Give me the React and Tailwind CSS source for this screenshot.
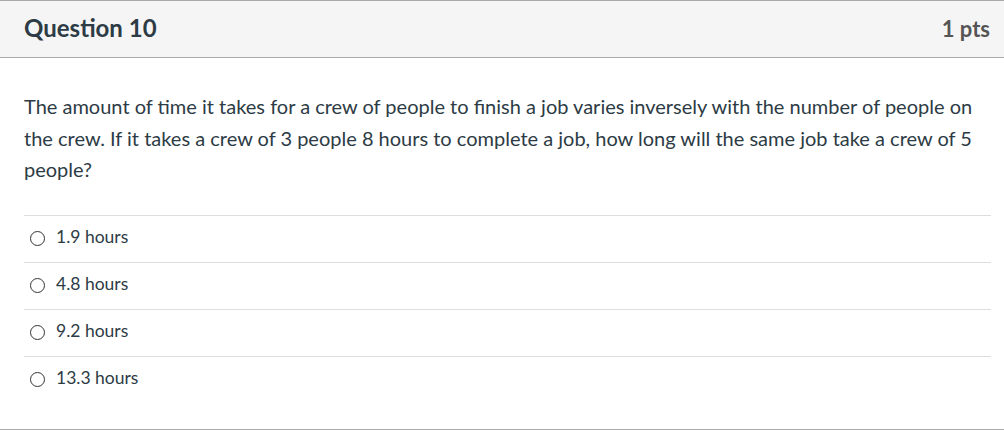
const ANSWERS = ["1.9 hours", "4.8 hours", "9.2 hours", "13.3 hours"];

export default function App() {
  return (
    <div className="w-[1004px] h-[430px] bg-white font-['Lato',sans-serif] text-[#2d3b45] overflow-hidden">
      <div className="border-t border-b border-[#aaaaaa] bg-[#f5f5f5] h-[58px] flex items-center justify-between pl-6 pr-[14px]">
        <h2 className="text-[24px] font-bold leading-none -mt-[2px]">Question 10</h2>
        <span className="text-[22px] font-bold leading-none text-[#555555] -mt-[1px]">1 pts</span>
      </div>

      <div className="pl-6 pr-[13px] pt-[33px]">
        <p className="text-[20px] leading-[31.5px] pr-4">
          The amount of time it takes for a crew of people to finish a job varies inversely with the number of
          people on the crew. If it takes a crew of 3 people 8 hours to complete a job, how long will the same
          job take a crew of 5 people?
        </p>

        <div className="mt-[29px]">
          {ANSWERS.map((a) => (
            <div key={a} className="border-t border-[#dddddd] h-[47px] flex items-center pb-[4px]">
              <span className="ml-[6px] w-[15px] h-[15px] rounded-full border border-[#333333] bg-white shrink-0 translate-y-[2px]" />
              <span className="ml-[11px] text-[17.5px] leading-none">{a}</span>
            </div>
          ))}
        </div>
      </div>

      <div className="mt-[26px] border-b border-[#aaaaaa]" />
    </div>
  );
}
